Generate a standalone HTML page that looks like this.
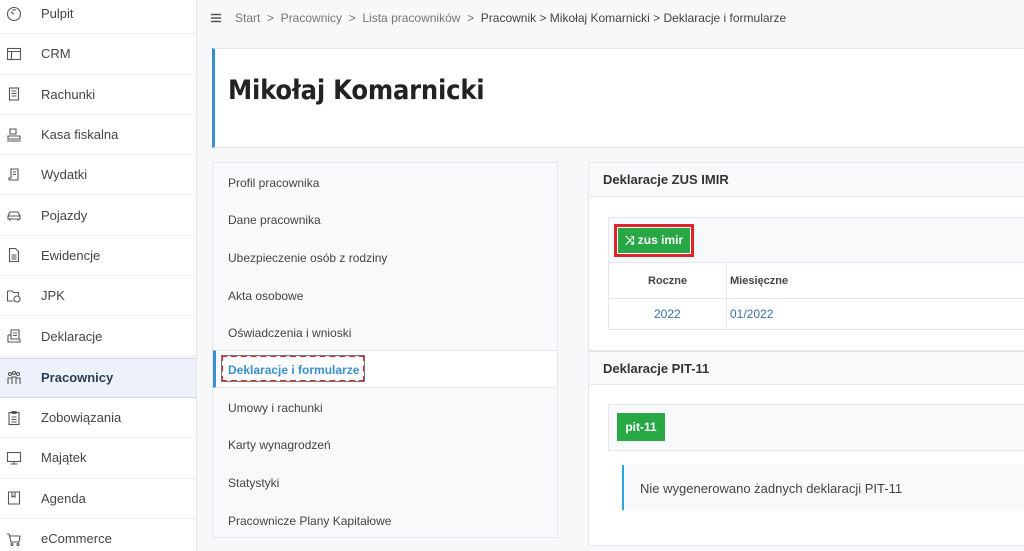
<!DOCTYPE html>
<html><head><meta charset="utf-8"><style>
*{box-sizing:border-box;margin:0;padding:0}
html,body{width:1024px;height:551px;overflow:hidden}
body{background:#f7f8fa;font-family:"Liberation Sans",Arial,sans-serif;font-size:13px;color:#444;position:relative}
.sb{position:absolute;left:0;top:0;width:197px;height:551px;background:#fff;border-right:1px solid #e2e4e8}
.it{position:absolute;left:0;width:196px;height:40.3px;border-bottom:1px solid #eef0f2;display:flex;align-items:center}
.it span{position:absolute;left:41px;font-size:13px;color:#444}
.it svg{position:absolute;left:6px}
.it.act{background:#edf2fa;border-top:1px solid #c9d8ec;border-bottom:1px solid #c9d8ec}
.it.act span{font-weight:bold;color:#2c3e50}
.abs{position:absolute}
.bc{left:235px;top:11px;font-size:12px;color:#777;white-space:nowrap}
.bc b{font-weight:normal;color:#444}
.card{background:#fff;border:1px solid #e3e6ea}
.mi{position:absolute;left:228px;font-size:12px;color:#444}
.ph{position:absolute;left:589px;width:435px;background:#f8f9fa;border-bottom:1px solid #e3e6ea;font-weight:bold;font-size:13px;color:#333;padding-left:14px;display:flex;align-items:center}
</style></head><body>
<div class="sb">
<div class="it" style="top:-6px"><svg width="16" height="16" viewBox="0 0 16 16" fill="none" stroke="#555" stroke-width="1.1"><circle cx="8" cy="8" r="6.5"/><path d="M8 8l-3-2M6 4h4"/></svg><span>Pulpit</span></div>
<div class="it" style="top:34.3px"><svg width="16" height="16" viewBox="0 0 16 16" fill="none" stroke="#555" stroke-width="1.1"><rect x="1.5" y="2.5" width="13" height="11"/><path d="M1.5 5.5h13M5.5 5.5v8"/></svg><span>CRM</span></div>
<div class="it" style="top:74.6px"><svg width="16" height="16" viewBox="0 0 16 16" fill="none" stroke="#555" stroke-width="1.1"><rect x="3.5" y="2" width="9" height="12"/><path d="M5.5 5h5M5.5 7.5h5M5.5 10h5"/></svg><span>Rachunki</span></div>
<div class="it" style="top:114.9px"><svg width="16" height="16" viewBox="0 0 16 16" fill="none" stroke="#555" stroke-width="1.1"><path d="M4 2h6v5H4zM2 9h12v3H2zM1 14h14"/></svg><span>Kasa fiskalna</span></div>
<div class="it" style="top:155.2px"><svg width="16" height="16" viewBox="0 0 16 16" fill="none" stroke="#555" stroke-width="1.1"><path d="M5 2h7v11H3v-2h2zM7 5h3M7 7.5h3"/></svg><span>Wydatki</span></div>
<div class="it" style="top:195.5px"><svg width="16" height="16" viewBox="0 0 16 16" fill="none" stroke="#555" stroke-width="1.1"><path d="M2 9l2-4h8l2 4v3H2zM2 9h12M4 12v2M12 12v2"/></svg><span>Pojazdy</span></div>
<div class="it" style="top:235.8px"><svg width="16" height="16" viewBox="0 0 16 16" fill="none" stroke="#555" stroke-width="1.1"><path d="M3.5 1.5h6l3 3v10h-9z M5.5 8h5M5.5 10h5M5.5 12h5"/></svg><span>Ewidencje</span></div>
<div class="it" style="top:276.1px"><svg width="16" height="16" viewBox="0 0 16 16" fill="none" stroke="#555" stroke-width="1.1"><path d="M1.5 3h5l1 1.5h5v3M1.5 3v10h6"/><circle cx="11" cy="11" r="3"/></svg><span>JPK</span></div>
<div class="it" style="top:316.4px"><svg width="16" height="16" viewBox="0 0 16 16" fill="none" stroke="#555" stroke-width="1.1"><path d="M5 2h8v9H5zM2 7h3M2 7v7h12v-3M7 5h4M7 7.5h4"/></svg><span>Deklaracje</span></div>
<div class="it act" style="top:357.7px"><svg width="16" height="16" viewBox="0 0 16 16" fill="none" stroke="#555" stroke-width="1.1"><circle cx="4" cy="4" r="1.5"/><circle cx="8" cy="3" r="1.5"/><circle cx="12" cy="4" r="1.5"/><path d="M2 14V8h4v6M6 14V7h4v7M10 14V8h4v6"/></svg><span>Pracownicy</span></div>
<div class="it" style="top:398px"><svg width="16" height="16" viewBox="0 0 16 16" fill="none" stroke="#555" stroke-width="1.1"><rect x="3" y="2.5" width="10" height="12"/><path d="M6 1.5h4v2H6zM5.5 7h5M5.5 9.5h5M5.5 12h5"/></svg><span>Zobowiązania</span></div>
<div class="it" style="top:438.3px"><svg width="16" height="16" viewBox="0 0 16 16" fill="none" stroke="#555" stroke-width="1.1"><rect x="1.5" y="2.5" width="13" height="9"/><path d="M8 11.5v2M4.5 14h7"/></svg><span>Majątek</span></div>
<div class="it" style="top:478.6px"><svg width="16" height="16" viewBox="0 0 16 16" fill="none" stroke="#555" stroke-width="1.1"><path d="M2.5 2h11v12h-11zM6 2v5l1.5-1 1.5 1V2"/></svg><span>Agenda</span></div>
<div class="it" style="top:518.9px"><svg width="16" height="16" viewBox="0 0 16 16" fill="none" stroke="#555" stroke-width="1.1"><path d="M1 3h2l2 8h8l1-6H4"/><circle cx="6" cy="13.5" r="1"/><circle cx="12" cy="13.5" r="1"/></svg><span>eCommerce</span></div>
</div>

<svg class="abs" style="left:211px;top:13px" width="10" height="10" viewBox="0 0 10 10" stroke="#555" stroke-width="1.5"><path d="M0 1.5h10M0 5h10M0 8.5h10"/></svg>
<div class="abs bc">Start &nbsp;&gt;&nbsp; Pracownicy &nbsp;&gt;&nbsp; Lista pracowników &nbsp;&gt;&nbsp; <b>Pracownik &gt; Mikołaj Komarnicki &gt; Deklaracje i formularze</b></div>

<div class="abs card" style="left:212px;top:48px;width:820px;height:100px;border-left:3px solid #3a8fd0"></div>
<div class="abs" style="left:228px;top:75px;font-size:27px;font-weight:bold;color:#222;font-family:'DejaVu Sans Condensed','DejaVu Sans','Liberation Sans',sans-serif;letter-spacing:-0.2px">Mikołaj Komarnicki</div>

<div class="abs card" style="left:212px;top:162px;width:346px;height:376px;background:#f8f9fa"></div>
<div class="abs" style="left:213px;top:350px;width:344px;height:38px;background:#fff;border-left:3px solid #3a8fd0;border-top:1px solid #e3e6ea;border-bottom:1px solid #e3e6ea"></div>
<div class="mi" style="top:176px">Profil pracownika</div>
<div class="mi" style="top:213px">Dane pracownika</div>
<div class="mi" style="top:251px">Ubezpieczenie osób z rodziny</div>
<div class="mi" style="top:289px">Akta osobowe</div>
<div class="mi" style="top:326px">Oświadczenia i wnioski</div>
<div class="abs" style="left:221px;top:355px;width:144px;height:27px;border:2px dashed #e0242e;outline:1px solid #777;outline-offset:-1px"></div>
<div class="mi" style="top:363px;color:#3a8fd0;font-weight:bold">Deklaracje i formularze</div>
<div class="mi" style="top:401px">Umowy i rachunki</div>
<div class="mi" style="top:438px">Karty wynagrodzeń</div>
<div class="mi" style="top:476px">Statystyki</div>
<div class="mi" style="top:514px">Pracownicze Plany Kapitałowe</div>

<div class="abs card" style="left:588px;top:162px;width:440px;height:189px"></div>
<div class="ph" style="top:163px;height:34px">Deklaracje ZUS IMIR</div>
<div class="abs" style="left:608px;top:217px;width:420px;height:113px;border:1px solid #e3e6ea;background:#fff"></div>
<div class="abs" style="left:609px;top:218px;width:415px;height:45px;background:#f8f9fa;border-bottom:1px solid #e3e6ea"></div>
<div class="abs" style="left:614px;top:224px;width:80px;height:33px;border:3px solid #e0242e"></div>
<div class="abs" style="left:618px;top:228px;width:72px;height:25px;background:#28a745;color:#fff;font-size:12px;font-weight:bold;display:flex;align-items:center;justify-content:center">⤨&nbsp;zus imir</div>
<div class="abs" style="left:726px;top:263px;width:1px;height:66px;background:#e3e6ea"></div>
<div class="abs" style="left:609px;top:298px;width:415px;height:1px;background:#e3e6ea"></div>
<div class="abs" style="left:648px;top:275px;font-size:11px;font-weight:bold;color:#444">Roczne</div>
<div class="abs" style="left:730px;top:275px;font-size:11px;font-weight:bold;color:#444">Miesięczne</div>
<div class="abs" style="left:654px;top:307px;font-size:12px;color:#3a6fa8">2022</div>
<div class="abs" style="left:730px;top:307px;font-size:12px;color:#3a6fa8">01/2022</div>

<div class="abs card" style="left:588px;top:351px;width:440px;height:195px"></div>
<div class="ph" style="top:352px;height:33px">Deklaracje PIT-11</div>
<div class="abs" style="left:608px;top:404px;width:420px;height:47px;border:1px solid #e3e6ea;background:#f8f9fa"></div>
<div class="abs" style="left:617px;top:413px;width:48px;height:28px;background:#28a745;color:#fff;font-size:12px;font-weight:bold;display:flex;align-items:center;justify-content:center">pit-11</div>
<div class="abs" style="left:622px;top:465px;width:402px;height:45px;background:#f8f9fa;border-left:2px solid #2ea6e0"></div>
<div class="abs" style="left:640px;top:481px;font-size:13px;color:#444">Nie wygenerowano żadnych deklaracji PIT-11</div>
</body></html>
